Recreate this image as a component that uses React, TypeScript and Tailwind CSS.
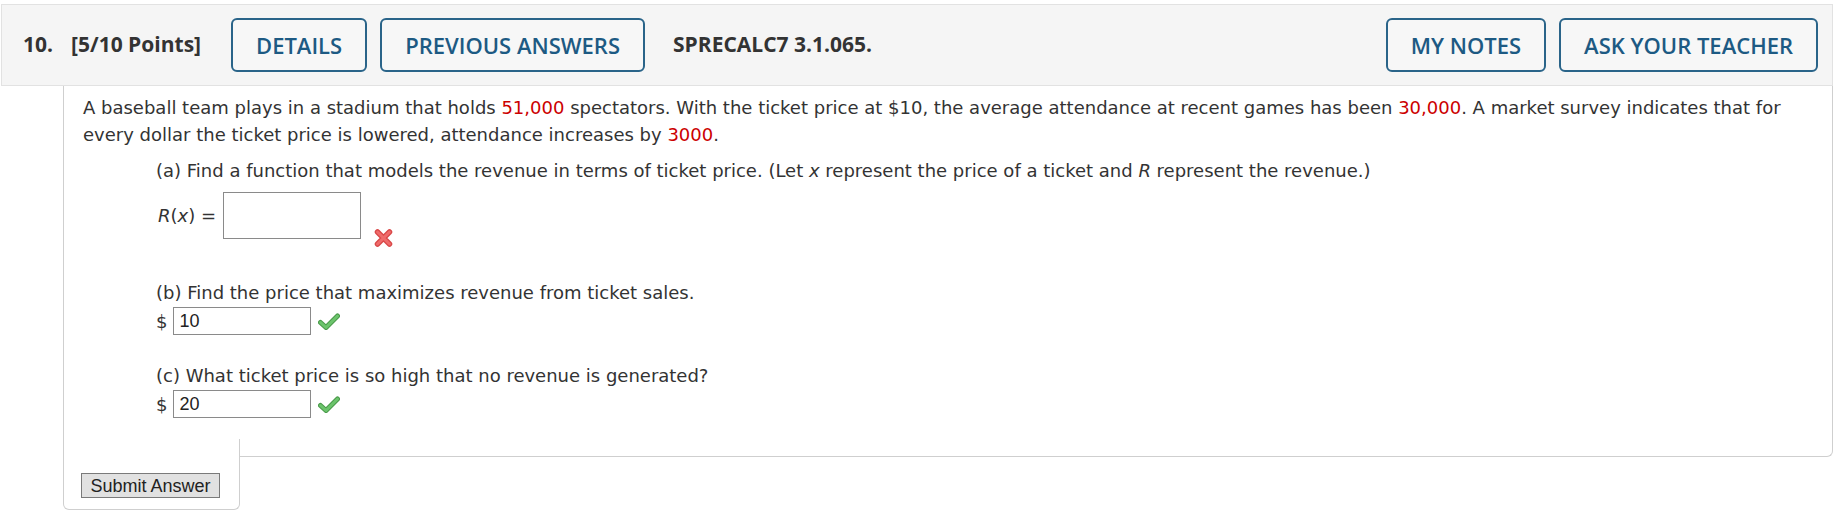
const body = { fontFamily: '"DejaVu Sans", Verdana, sans-serif' };
const head = { fontFamily: '"Open Sans", "Liberation Sans", sans-serif' };
const arial = { fontFamily: '"Liberation Sans", Arial, sans-serif' };

function Check() {
  return (
    <svg width="22" height="17" viewBox="0 0 22 17" className="ml-[7px]">
      <path d="M2.5 9.5 L8 14.5 L19.5 3" fill="none" stroke="#4a9a4a" strokeWidth="5" strokeLinecap="round" strokeLinejoin="round" />
      <path d="M2.5 9.5 L8 14.5 L19.5 3" fill="none" stroke="#6cc46c" strokeWidth="3" strokeLinecap="round" strokeLinejoin="round" />
    </svg>
  );
}

function Cross() {
  return (
    <svg width="19" height="18" viewBox="0 0 19 18">
      <path d="M3.5 3 L15.5 15 M15.5 3 L3.5 15" fill="none" stroke="#d94848" strokeWidth="5.5" strokeLinecap="round" />
      <path d="M3.5 3 L15.5 15 M15.5 3 L3.5 15" fill="none" stroke="#ef6b6b" strokeWidth="3" strokeLinecap="round" />
    </svg>
  );
}

function HeadButton({ label }: { label: string }) {
  return (
    <button
      className="h-[54px] px-[23px] rounded-[6px] border-2 border-[#2a6489] bg-[#f7f7f7] text-[#1d5a83] text-[22px] font-semibold"
      style={head}
    >
      {label}
    </button>
  );
}

function Answer({ value }: { value: string }) {
  return (
    <div className="flex items-center mt-[1px] text-[18px] text-[#333]">
      <span>$</span>
      <div
        className="ml-[6px] w-[138px] h-[28px] border border-[#8a8a8a] bg-white pl-[5px] flex items-center text-[18px] text-[#222]"
        style={arial}
      >
        {value}
      </div>
      <Check />
    </div>
  );
}

export default function App() {
  return (
    <div className="bg-white w-[1841px] h-[512px] pt-[4px]">
      {/* Question header */}
      <div
        className="ml-px w-[1832px] border border-[#e2e2e2] bg-[#f5f5f5] flex items-center py-[13px] pl-[21px] pr-[14px] text-[#333] text-[21px] font-bold"
        style={head}
      >
        <span>10.</span>
        <span className="ml-[18px]">[5/10 Points]</span>
        <div className="ml-[30px] flex gap-[13px]">
          <HeadButton label="DETAILS" />
          <HeadButton label="PREVIOUS ANSWERS" />
        </div>
        <span className="ml-[28px]">SPRECALC7 3.1.065.</span>
        <div className="ml-auto flex gap-[13px]">
          <HeadButton label="MY NOTES" />
          <HeadButton label="ASK YOUR TEACHER" />
        </div>
      </div>

      {/* Question body */}
      <div className="ml-[63px] w-[1770px] border-l border-r border-[#cfcfcf] pt-[8px] pl-[19px] pr-[20px] pb-[21px] text-[18px] text-[#333]" style={body}>
        <p className="leading-[27px]">
          A baseball team plays in a stadium that holds <span className="text-[#cc0000]">51,000</span> spectators. With the ticket
          price at $10, the average attendance at recent games has been <span className="text-[#cc0000]">30,000</span>. A market
          survey indicates that for every dollar the ticket price is lowered, attendance increases by{" "}
          <span className="text-[#cc0000]">3000</span>.
        </p>

        <div className="pl-[73px]">
          <p className="mt-[9px] leading-[27px]">
            (a) Find a function that models the revenue in terms of ticket price. (Let <i>x</i> represent the price of a
            ticket and <i>R</i> represent the revenue.)
          </p>
          <div className="mt-[8px] h-[47px] flex items-start">
            <div className="h-[47px] flex items-center pl-[2px]">
              <span>
                <i>R</i>(<i>x</i>) =
              </span>
            </div>
            <div className="ml-[7px] w-[138px] h-[47px] border border-[#8a8a8a] bg-white" />
            <div className="ml-[13px] mt-[37px]">
              <Cross />
            </div>
          </div>

          <p className="mt-[40px] leading-[27px]">(b) Find the price that maximizes revenue from ticket sales.</p>
          <Answer value="10" />

          <p className="mt-[27px] leading-[27px]">(c) What ticket price is so high that no revenue is generated?</p>
          <Answer value="20" />
        </div>
      </div>

      {/* Submit tab */}
      <div className="ml-[63px] w-[1770px] flex items-start">
        <div className="w-[177px] h-[71px] border-l border-r border-b border-[#cfcfcf] rounded-b-[6px] pt-[34px] pl-[17px]">
          <button
            className="w-[139px] h-[25px] border border-[#7a7a7a] bg-[#e1e1e1] text-[18px] text-[#222] leading-none"
            style={arial}
          >
            Submit Answer
          </button>
        </div>
        <div className="flex-1 h-[18px] border-r border-b border-[#cfcfcf] rounded-br-[6px]" />
      </div>
    </div>
  );
}
